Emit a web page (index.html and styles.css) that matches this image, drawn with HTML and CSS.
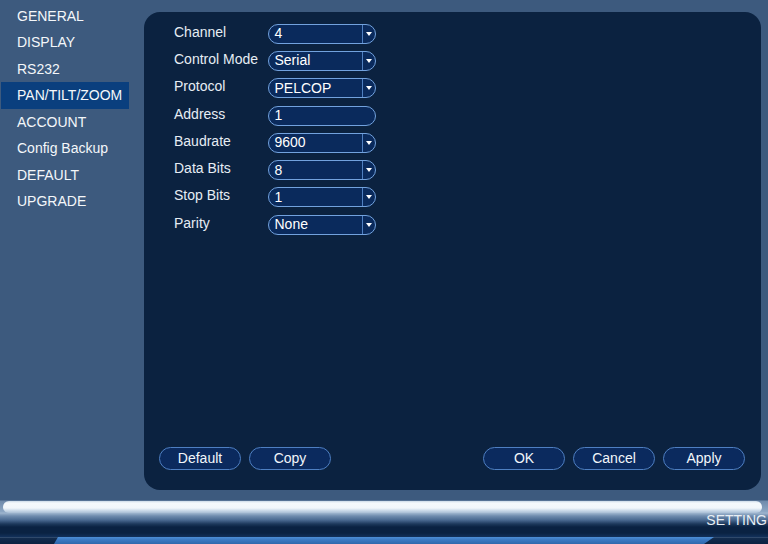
FILE: index.html
```html
<!DOCTYPE html>
<html>
<head>
<meta charset="utf-8">
<link rel="stylesheet" href="styles.css">
</head>
<body>
<div class="screen">
  <div class="top">
    <nav class="sidebar">
      <div class="nav-item">GENERAL</div>
      <div class="nav-item">DISPLAY</div>
      <div class="nav-item">RS232</div>
      <div class="nav-item active">PAN/TILT/ZOOM</div>
      <div class="nav-item">ACCOUNT</div>
      <div class="nav-item">Config Backup</div>
      <div class="nav-item">DEFAULT</div>
      <div class="nav-item">UPGRADE</div>
    </nav>
    <main class="panel">
      <div class="form">
        <div class="label">Channel</div>
        <div class="field select"><span class="value">4</span><span class="drop"><span class="arrow"></span></span></div>
        <div class="label">Control Mode</div>
        <div class="field select"><span class="value">Serial</span><span class="drop"><span class="arrow"></span></span></div>
        <div class="label">Protocol</div>
        <div class="field select"><span class="value">PELCOP</span><span class="drop"><span class="arrow"></span></span></div>
        <div class="label">Address</div>
        <div class="field"><span class="value">1</span></div>
        <div class="label">Baudrate</div>
        <div class="field select"><span class="value">9600</span><span class="drop"><span class="arrow"></span></span></div>
        <div class="label">Data Bits</div>
        <div class="field select"><span class="value">8</span><span class="drop"><span class="arrow"></span></span></div>
        <div class="label">Stop Bits</div>
        <div class="field select"><span class="value">1</span><span class="drop"><span class="arrow"></span></span></div>
        <div class="label">Parity</div>
        <div class="field select"><span class="value">None</span><span class="drop"><span class="arrow"></span></span></div>
      </div>
      <div class="buttons">
        <div class="group">
          <div class="btn">Default</div>
          <div class="btn">Copy</div>
        </div>
        <div class="group">
          <div class="btn">OK</div>
          <div class="btn">Cancel</div>
          <div class="btn">Apply</div>
        </div>
      </div>
    </main>
  </div>
  <div class="bottom">
    <div class="bar">
      <div class="shine"></div>
      <div class="setting">SETTING</div>
    </div>
    <div class="stripe"><div class="stripe-blue"></div></div>
  </div>
</div>
</body>
</html>
```

FILE: styles.css
```css
* { box-sizing: border-box; }
html, body {
  margin: 0;
  padding: 0;
}
body {
  width: 768px;
  height: 544px;
  overflow: hidden;
  background: #3d5a7e;
  font-family: "Liberation Sans", Arial, sans-serif;
  font-size: 14px;
  color: #ffffff;
}
.screen {
  display: flex;
  flex-direction: column;
  width: 768px;
  height: 544px;
}
.top {
  display: flex;
  height: 500px;
}
.sidebar {
  width: 144px;
  padding-top: 3px;
  padding-left: 1px;
}
.nav-item {
  width: 128px;
  height: 26.43px;
  line-height: 26.43px;
  padding-left: 16px;
  white-space: nowrap;
  color: #f4f7fa;
}
.nav-item.active {
  background: #0a3f7e;
}
.panel {
  margin-top: 12px;
  width: 617px;
  height: 478px;
  background: #0b2240;
  border-radius: 16px;
  display: flex;
  flex-direction: column;
  justify-content: space-between;
  padding: 7px 16px 20px 15px;
}
.form {
  display: grid;
  grid-template-columns: 94px 108px;
  grid-auto-rows: 27.3px;
  align-items: center;
  padding-left: 15px;
  padding-top: 1px;
}
.label {
  color: #e6edf4;
  margin-bottom: 4px;
  white-space: nowrap;
}
.field {
  height: 20px;
  border: 1.5px solid #72a2de;
  border-radius: 10px;
  background: #0a2a5c;
  display: flex;
  align-items: center;
  overflow: hidden;
}
.value {
  flex: 1;
  padding-left: 5.5px;
  color: #ffffff;
  line-height: 17px;
}
.drop {
  width: 13px;
  height: 100%;
  border-left: 1px solid #4f7fc0;
  display: flex;
  align-items: center;
  justify-content: center;
}
.arrow {
  width: 0;
  height: 0;
  border-left: 3px solid transparent;
  border-right: 3px solid transparent;
  border-top: 4px solid #ffffff;
  margin-right: 1px;
}
.buttons {
  display: flex;
  justify-content: space-between;
}
.group {
  display: flex;
  gap: 8px;
}
.btn {
  width: 82px;
  height: 23px;
  border: 1.5px solid #4e7fc2;
  border-radius: 12px;
  background: #0b2a5e;
  color: #f2f6fa;
  text-align: center;
  line-height: 20px;
}
.bottom {
  height: 44px;
  display: flex;
  flex-direction: column;
}
.bar {
  height: 37px;
  background: linear-gradient(to bottom, #3d5a7e 0px, #6f8aab 1px, #8ea8c5 12px, #9fb6cf 13px, #6f8cae 16px, #4a6a91 20px, #1c385b 24px, #0a2242 27px, #0a2242 33px, #12305a 37px);
  display: flex;
  flex-direction: column;
}
.shine {
  height: 12px;
  margin: 1px 6px 0 3px;
  border-radius: 6px;
  background: linear-gradient(to bottom, #cddbe8 0px, #f5f9fc 2px, #f2f7fb 7px, #c4d5e6 10px, #a8bdd4 12px);
}
.setting {
  text-align: right;
  line-height: 14px;
  padding-right: 1px;
  color: #e8eef4;
}
.stripe {
  height: 7px;
  background: linear-gradient(to bottom, #4b6587 0px, #132c4e 1px, #0b2242 7px);
}
.stripe-blue {
  height: 7px;
  margin-left: 54px;
  width: 660px;
  background: linear-gradient(to bottom, #4d8fd6 0px, #3a78c2 3px, #2f68ac 7px);
  clip-path: polygon(4px 0, 660px 0, 650px 7px, 0 7px);
}
```
